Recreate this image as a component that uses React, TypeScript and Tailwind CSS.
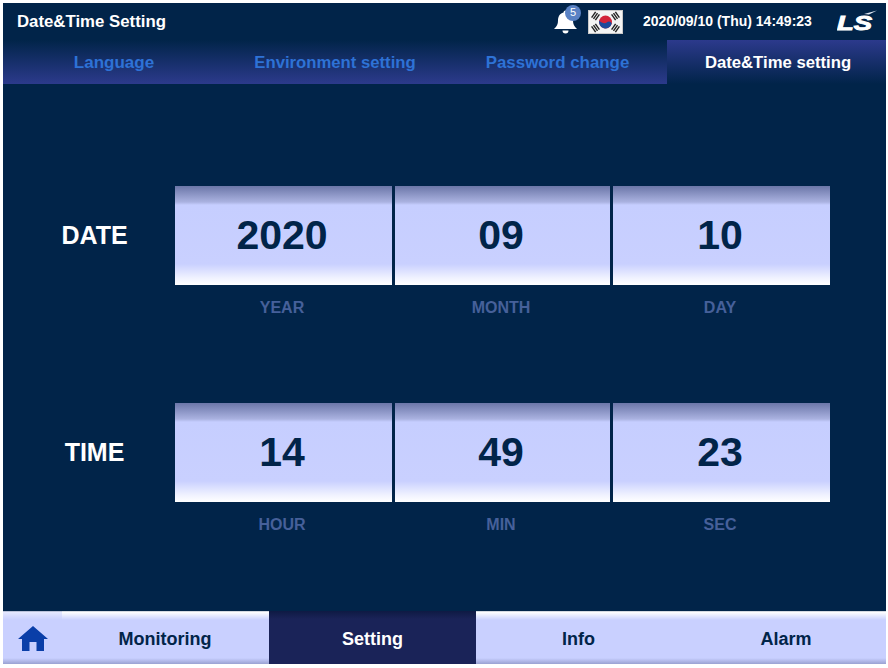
const font = { fontFamily: '"Liberation Sans", Arial, sans-serif' }

const tabs = ['Language', 'Environment setting', 'Password change']

function Flag() {
  const bars = (x: number, y: number, rot: number) => (
    <g transform={`translate(${x} ${y}) rotate(${rot})`} fill="#222">
      <rect x="-3.5" y="-3" width="7" height="1.4" />
      <rect x="-3.5" y="-0.7" width="7" height="1.4" />
      <rect x="-3.5" y="1.6" width="7" height="1.4" />
    </g>
  )
  return (
    <svg width="35" height="24" viewBox="0 0 35 24" className="block">
      <rect width="35" height="24" fill="#c9c9c9" />
      <rect x="1" y="1" width="33" height="22" fill="#f4f4f4" />
      {bars(7.5, 6, -55)}
      {bars(27.5, 6, 55)}
      {bars(7.5, 18, 55)}
      {bars(27.5, 18, -55)}
      <circle cx="17.5" cy="12" r="6.5" fill="#d3243a" />
      <path d="M11.2 10.4a6.5 6.5 0 0 0 12.6 3.2c-1 -2.4 -3.2 -2.8 -4.8 -1.3c-1.7 1.7 -5.6 .9 -7.8 -1.9z" fill="#1c4a9c" />
    </svg>
  )
}

function BellIcon() {
  return (
    <svg width="23" height="24" viewBox="0 0 23 24" className="block">
      <path d="M11.5 0.5a2 2 0 0 1 2 2c4 1 5.5 4.5 5.5 8c0 3.5 1 5.5 4 8.5H0c3 -3 4 -5 4 -8.5c0 -3.5 1.5 -7 5.5 -8a2 2 0 0 1 2 -2z" fill="#fff" />
      <path d="M8.5 20.5h6a3 3 0 0 1 -6 0z" fill="#fff" />
    </svg>
  )
}

function Logo() {
  return (
    <svg width="40" height="30" viewBox="0 0 40 30" className="block">
      <text x="0" y="22.5" fontFamily="'Liberation Sans', sans-serif" fontSize="21" fontWeight="700" fontStyle="italic" fill="#fff" stroke="#fff" strokeWidth="1" textLength="35" lengthAdjust="spacingAndGlyphs">LS</text>
      <path d="M27 7 L40 3.5 L32 7.5 Z" fill="#dfe6f2" />
    </svg>
  )
}

function Row({ label, cells }: { label: string; cells: { value: string; name: string }[] }) {
  return (
    <div className="flex">
      <div className="w-[172px] h-[99px] flex items-center justify-center text-white text-[25px] font-bold pl-[11px]">{label}</div>
      <div className="flex gap-[3px]">
        {cells.map((c, i) => (
          <div key={c.name} className={i === 1 ? 'w-[215px]' : 'w-[217px]'}>
            <div className="h-[99px] pr-[3px] flex items-center justify-center text-[41px] font-bold text-[#012449] bg-[linear-gradient(to_bottom,#6b76a8_0px,#aab2e0_16px,#c6ceff_19px,#c9d0ff_78px,#f0f2ff_92px,#ffffff_99px)]">
              {c.value}
            </div>
            <div className="mt-[13px] pr-[3px] text-center text-[16px] leading-[20px] font-bold text-[#46609a]">{c.name}</div>
          </div>
        ))}
      </div>
    </div>
  )
}

function FootItem({ label, className }: { label: string; className: string }) {
  return (
    <div className={`h-full pt-[3px] flex items-center justify-center text-[18px] font-bold text-[#012449] ${className}`}>{label}</div>
  )
}

export default function App() {
  return (
    <div style={font} className="w-[888px] h-[668px] bg-white pt-[3px] pl-[3px] pr-[2px] pb-[4px] overflow-hidden">
      <div className="w-full h-full flex flex-col bg-[#012449]">
        {/* Title bar */}
        <div className="h-[37px] flex items-center shrink-0">
          <div className="pl-[14px] text-white text-[16.8px] font-bold whitespace-nowrap">Date&amp;Time Setting</div>
          <div className="ml-auto flex items-center">
            <div className="relative mr-[11px]">
              <BellIcon />
              <span className="absolute -top-[5px] left-[11px] w-[16px] h-[16px] rounded-full bg-[#5a82c4] text-white text-[11px] font-normal flex items-center justify-center">5</span>
            </div>
            <Flag />
            <div className="ml-[20px] text-white text-[14px] font-bold w-[169px] whitespace-nowrap">2020/09/10 (Thu) 14:49:23</div>
            <div className="ml-[25px] mr-[9px]"><Logo /></div>
          </div>
        </div>

        {/* Tabs */}
        <div className="h-[44px] flex shrink-0 bg-[linear-gradient(to_bottom,#012449,#2c3a8c)]">
          <div className="w-[222px] pt-[1px] flex items-center justify-center text-[17px] font-bold text-[#2e72d6]">{tabs[0]}</div>
          <div className="w-[220px] pt-[1px] flex items-center justify-center text-[16.7px] font-bold text-[#2e72d6]">{tabs[1]}</div>
          <div className="w-[222px] pt-[1px] pl-[3px] flex items-center justify-center text-[16.9px] font-bold text-[#2e72d6]">{tabs[2]}</div>
          <div className="flex-1 pt-[1px] pl-[3px] flex items-center justify-center text-[16.7px] font-bold text-white bg-[linear-gradient(to_bottom,#2c3a8c,#012449)]">Date&amp;Time setting</div>
        </div>

        {/* Content */}
        <div className="flex-1 flex flex-col pt-[102px] gap-[85px]">
          <Row
            label="DATE"
            cells={[
              { value: '2020', name: 'YEAR' },
              { value: '09', name: 'MONTH' },
              { value: '10', name: 'DAY' },
            ]}
          />
          <Row
            label="TIME"
            cells={[
              { value: '14', name: 'HOUR' },
              { value: '49', name: 'MIN' },
              { value: '23', name: 'SEC' },
            ]}
          />
        </div>

        {/* Bottom menu */}
        <div className="h-[53px] flex shrink-0 bg-[linear-gradient(to_bottom,#aab4c4_0px,#ffffff_1px,#e4e8ff_5px,#c9d0ff_9px,#c9d0ff_47px,#9aa2d2_53px)]">
          <div className="w-[59px] flex items-center justify-center bg-[linear-gradient(to_bottom,#8f9bb5_0px,#e6e9ff_1px,#d6dbff_5px,#c9d0ff_9px,#c9d0ff_47px,#9aa2d2_53px)]">
            <svg width="30" height="27" viewBox="0 0 30 27" className="block mt-[2px]">
              <path d="M15 1 L30 14 L26 14 L26 26 L18.5 26 L18.5 17 L11.5 17 L11.5 26 L4 26 L4 14 L0 14 Z" fill="#0a3ea8" />
            </svg>
          </div>
          <FootItem label="Monitoring" className="w-[206px]" />
          <FootItem label="Setting" className="w-[207px] ml-[1px] text-white bg-[linear-gradient(to_bottom,#0e1a44_0px,#1a2358_8px,#1a2358_100%)]" />
          <FootItem label="Info" className="w-[205px]" />
          <FootItem label="Alarm" className="flex-1 pl-[5px]" />
        </div>
      </div>
    </div>
  )
}
